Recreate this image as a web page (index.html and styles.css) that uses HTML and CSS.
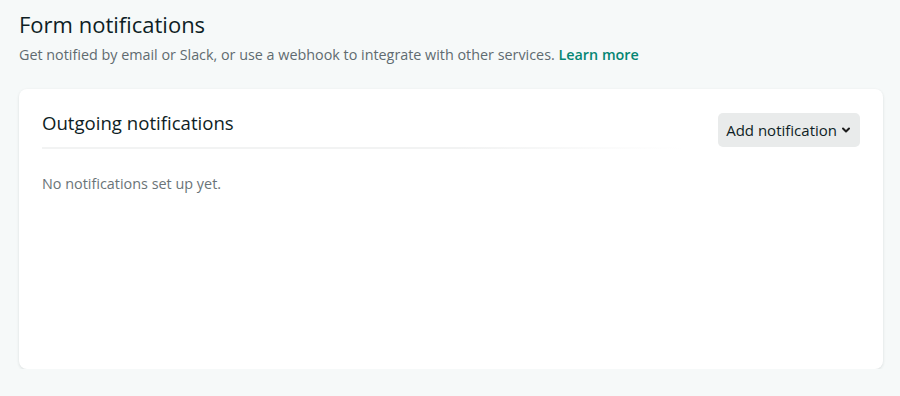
FILE: index.html
```html
<!DOCTYPE html>
<html>
<head>
<meta charset="utf-8">
<link rel="stylesheet" href="styles.css">
</head>
<body>
<main class="page">
  <header class="page-head">
    <h1 class="title">Form notifications</h1>
    <p class="subtitle">Get notified by email or Slack, or use a webhook to integrate with other services. <a class="link" href="#">Learn more</a></p>
  </header>
  <section class="card">
    <div class="card-top">
      <div class="card-head">
        <h2 class="card-title">Outgoing notifications</h2>
      </div>
      <button class="btn" type="button">Add notification
        <svg class="chev" width="10" height="10" viewBox="0 0 10 10"><path d="M2 3.5 L5 6.5 L8 3.5" fill="none" stroke="#1d1d1d" stroke-width="2" stroke-linecap="round" stroke-linejoin="round"/></svg>
      </button>
    </div>
    <p class="empty">No notifications set up yet.</p>
  </section>
</main>
</body>
</html>
```

FILE: styles.css
```css
html, body {
  margin: 0;
  padding: 0;
  background: #f6f9f9;
}
body {
  font-family: "Open Sans", "Noto Sans", sans-serif;
  color: #0e1e25;
}
.page {
  padding: 8px 17px 0 19px;
}
.title {
  margin: 0;
  font-size: 22px;
  font-weight: 400;
  line-height: 32px;
  color: #0e1e25;
}
.subtitle {
  margin: 3px 0 0;
  font-size: 14.35px;
  line-height: 24px;
  color: #5f6b70;
}
.link {
  color: #058673;
  font-weight: 600;
  text-decoration: none;
}
.card {
  margin-top: 22px;
  background: #fff;
  border-radius: 8px;
  box-shadow: 0 1px 3px rgba(14, 30, 37, 0.12);
  height: 280px;
  box-sizing: border-box;
  padding: 21px 23px 0 23px;
}
.card-top {
  display: flex;
  justify-content: space-between;
  align-items: flex-start;
}
.card-head {
  flex: 0 0 640px;
  padding-bottom: 11px;
  border-bottom: 2px solid transparent;
  border-image: linear-gradient(to right, #f2f3f3 65%, rgba(242,243,243,0)) 1;
}
.card-title {
  margin: 0;
  font-size: 18.6px;
  font-weight: 500;
  line-height: 26px;
}
.btn {
  margin-top: 3px;
  display: inline-flex;
  align-items: center;
  gap: 4px;
  height: 34px;
  padding: 0 9px 0 8px;
  background: #e9ebeb;
  border: 0;
  border-radius: 5px;
  font-family: inherit;
  font-size: 15px;
  color: #0e1e25;
}
.chev {
  display: block;
}
.empty {
  margin: 25px 0 0;
  font-size: 14.4px;
  line-height: 20px;
  color: #6a7478;
}
```
